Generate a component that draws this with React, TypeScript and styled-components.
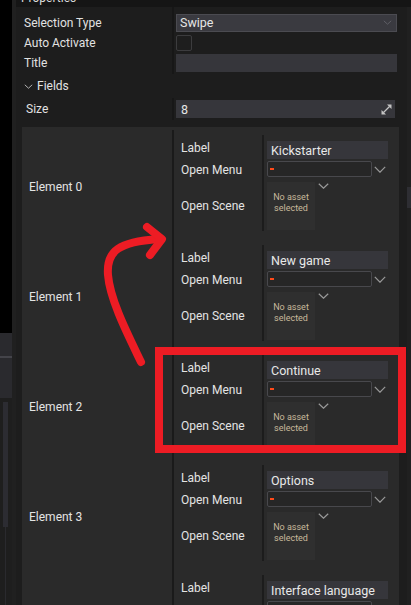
import styled, { createGlobalStyle } from 'styled-components';

const GlobalStyle = createGlobalStyle`
  html, body {
    margin: 0;
    padding: 0;
    background: #1d1d1d;
    overflow: hidden;
  }
  body {
    font-family: Roboto, "Liberation Sans", Arial, sans-serif;
    font-size: 12px;
    color: #e2e2e2;
  }
  * {
    box-sizing: border-box;
  }
`;

const Screen = styled.div`
  position: relative;
  display: flex;
  width: 411px;
  height: 605px;
  overflow: hidden;
`;

/* neighbouring dock panel, cut off at the left */
const SideDock = styled.div`
  width: 12px;
  flex-shrink: 0;
  display: flex;
  flex-direction: column;
`;

const DockViewport = styled.div`
  height: 333px;
  flex-shrink: 0;
  background: #000;
`;

const DockToolbar = styled.div`
  height: 65px;
  flex-shrink: 0;
  background: #2a2a2e;
  padding-top: 23px;
`;

const DockRule = styled.div`
  height: 2px;
  background: #44444a;
`;

const DockList = styled.div`
  flex: 1;
  display: flex;
  flex-direction: column;
  background: #1e1e1e;
  padding: 4px 0 0 3px;
`;

const DockThumb = styled.div`
  width: 5px;
  height: 125px;
  flex-shrink: 0;
  background: #2c2c32;
`;

const DockTrack = styled.div`
  flex: 1;
  width: 1px;
  margin-left: 2px;
  background: #2a2a2e;
`;

const Gutter = styled.div`
  width: 4px;
  flex-shrink: 0;
  background: #202020;
`;

const Main = styled.div`
  flex: 1;
  display: flex;
  flex-direction: column;
  background: #1d1d1d;
  min-width: 0;
`;

const Header = styled.div`
  height: 7px;
  flex-shrink: 0;
  background: #151515;
  overflow: hidden;
  padding-left: 5px;
`;

const HeaderTitle = styled.div`
  margin-top: -9px;
  line-height: 14px;
  font-size: 12px;
  color: #dcdcdc;
`;

const Body = styled.div`
  flex: 1;
  display: flex;
  min-height: 0;
`;

const Content = styled.div`
  flex: 1;
  display: flex;
  flex-direction: column;
  min-width: 0;
  overflow: hidden;
`;

const ScrollTrack = styled.div`
  width: 4px;
  flex-shrink: 0;
  background: #202020;
  padding-top: 180px;
`;

const ScrollThumb = styled.div`
  height: 21px;
  background: #2e2e33;
`;

const PropRow = styled.div<{ $h: number; $pt?: number }>`
  display: flex;
  flex-shrink: 0;
  height: ${p => p.$h}px;

  & > div {
    padding-top: ${p => p.$pt ?? 0}px;
  }
`;

const PropLabel = styled.div<{ $indent?: number }>`
  width: 156px;
  flex-shrink: 0;
  display: flex;
  align-items: center;
  padding-left: ${p => p.$indent ?? 8}px;
  white-space: nowrap;
`;

const PropValue = styled.div<{ $right?: number }>`
  flex: 1;
  display: flex;
  align-items: center;
  border-left: 2px solid #171717;
  padding-left: 2px;
  padding-right: ${p => p.$right ?? 10}px;
`;

const Dropdown = styled.div`
  flex: 1;
  height: 18px;
  display: flex;
  align-items: center;
  justify-content: space-between;
  background: #3a3a40;
  border: 1px solid #4b4b51;
  padding: 0 4px 0 3px;
  font-size: 12.5px;
  color: #e6e6e6;
`;

const Checkbox = styled.div`
  width: 16px;
  height: 16px;
  border: 1px solid #3c3c3e;
  border-radius: 2px;
  background: #1e1e1e;
`;

const TextField = styled.div`
  flex: 1;
  height: 18px;
  display: flex;
  align-items: center;
  justify-content: space-between;
  background: #36363b;
  padding: 0 3px 0 5px;
  font-size: 12.5px;
  color: #e6e6e6;
`;

const SectionRow = styled.div`
  height: 24px;
  flex-shrink: 0;
  display: flex;
  align-items: center;
  gap: 4px;
  padding-left: 8px;
`;

const ElementsBox = styled.div`
  flex-shrink: 0;
  margin: 7px 8px 0 6px;
  padding-top: 3px;
  background: #2a2a2a;
  display: flex;
  flex-direction: column;
`;

const ElementRow = styled.div`
  height: 110px;
  flex-shrink: 0;
  display: flex;
`;

const ElementName = styled.div`
  width: 150px;
  flex-shrink: 0;
  display: flex;
  align-items: center;
  padding: 3px 0 0 7px;
  color: #e4e4e4;
`;

const ElementBody = styled.div`
  flex: 1;
  border-left: 2px solid #1a1a1a;
  padding-top: 5px;
`;

const FieldGrid = styled.div`
  display: grid;
  grid-template-columns: 88px 2px 1fr;
  grid-template-rows: 24px 20px 52px;
`;

const FieldLabel = styled.div`
  display: flex;
  align-items: center;
  padding: 2px 0 0 7px;
  white-space: nowrap;
  color: #e4e4e4;
`;

const FieldDivider = styled.div`
  grid-column: 2;
  grid-row: 1 / -1;
  background: #1c1c1c;
`;

const FieldValue = styled.div<{ $align?: string }>`
  grid-column: 3;
  display: flex;
  align-items: ${p => p.$align ?? 'center'};
  padding-left: 3px;
`;

const LabelInput = styled.div`
  width: 121px;
  height: 18px;
  margin-top: 6px;
  display: flex;
  align-items: center;
  background: #36363b;
  padding-left: 4px;
  font-size: 12.5px;
  color: #e8e8e8;
  white-space: nowrap;
  overflow: hidden;
`;

const MenuBox = styled.div`
  width: 105px;
  height: 16px;
  display: flex;
  align-items: center;
  border: 1px solid #48484c;
  border-radius: 2px;
  background: #262626;
  padding-left: 2px;
  margin-right: 2px;
`;

const EmptyDash = styled.span`
  width: 4px;
  height: 2px;
  background: #ff4a1a;
`;

const AssetBox = styled.div`
  width: 48px;
  height: 48px;
  margin-top: 3px;
  display: flex;
  align-items: center;
  justify-content: center;
  padding-bottom: 7px;
  background: #2f2f2f;
  color: #c8b99c;
  font-size: 9px;
  line-height: 11px;
  text-align: center;
`;

const AssetArrow = styled.div`
  margin: 4px 0 0 3px;
  display: flex;
`;

const Overlay = styled.svg`
  position: absolute;
  left: 0;
  top: 0;
  pointer-events: none;
`;

function Chevron({ w, h, color, sw = 1.2 }: { w: number; h: number; color: string; sw?: number }) {
  return (
    <svg width={w} height={h} viewBox={`0 0 ${w} ${h}`}>
      <polyline
        points={`0.8,0.8 ${w / 2},${h - 0.8} ${w - 0.8},0.8`}
        fill="none"
        stroke={color}
        strokeWidth={sw}
      />
    </svg>
  );
}

function ExpandIcon() {
  return (
    <svg width="11" height="11" viewBox="0 0 11 11">
      <line x1="2.5" y1="8.5" x2="8.5" y2="2.5" stroke="#c4c4c4" strokeWidth="1.2" />
      <polygon points="10.5,0.5 10.5,5 6,0.5" fill="#c4c4c4" />
      <polygon points="0.5,10.5 0.5,6 5,10.5" fill="#c4c4c4" />
    </svg>
  );
}

const elements = ['Kickstarter', 'New game', 'Continue', 'Options', 'Interface language'];

function ElementEntry({ index, label }: { index: number; label: string }) {
  return (
    <ElementRow>
      <ElementName>Element {index}</ElementName>
      <ElementBody>
        <FieldGrid>
          <FieldLabel>Label</FieldLabel>
          <FieldDivider />
          <FieldValue $align="flex-start">
            <LabelInput>{label}</LabelInput>
          </FieldValue>
          <FieldLabel>Open Menu</FieldLabel>
          <FieldValue>
            <MenuBox>
              <EmptyDash />
            </MenuBox>
            <Chevron w={12} h={7} color="#9a9a9a" />
          </FieldValue>
          <FieldLabel>Open Scene</FieldLabel>
          <FieldValue $align="flex-start">
            <AssetBox>
              No asset
              <br />
              selected
            </AssetBox>
            <AssetArrow>
              <Chevron w={11} h={6} color="#9a9a9a" />
            </AssetArrow>
          </FieldValue>
        </FieldGrid>
      </ElementBody>
    </ElementRow>
  );
}

export default function App() {
  return (
    <>
      <GlobalStyle />
      <Screen>
        <SideDock>
          <DockViewport />
          <DockToolbar>
            <DockRule />
          </DockToolbar>
          <DockList>
            <DockThumb />
            <DockTrack />
          </DockList>
        </SideDock>
        <Gutter />
        <Main>
          <Header>
            <HeaderTitle>Properties</HeaderTitle>
          </Header>
          <Body>
            <Content>
              <PropRow $h={26} $pt={5}>
                <PropLabel>Selection Type</PropLabel>
                <PropValue>
                  <Dropdown>
                    Swipe
                    <Chevron w={9} h={5} color="#5f5f66" sw={1} />
                  </Dropdown>
                </PropValue>
              </PropRow>
              <PropRow $h={19}>
                <PropLabel>Auto Activate</PropLabel>
                <PropValue>
                  <Checkbox />
                </PropValue>
              </PropRow>
              <PropRow $h={22}>
                <PropLabel>Title</PropLabel>
                <PropValue>
                  <TextField />
                </PropValue>
              </PropRow>
              <SectionRow>
                <Chevron w={9} h={5} color="#b0b0b0" sw={1} />
                Fields
              </SectionRow>
              <PropRow $h={22}>
                <PropLabel $indent={10}>Size</PropLabel>
                <PropValue $right={12}>
                  <TextField>
                    8
                    <ExpandIcon />
                  </TextField>
                </PropValue>
              </PropRow>
              <ElementsBox>
                {elements.map((label, i) => (
                  <ElementEntry key={label} index={i} label={label} />
                ))}
              </ElementsBox>
            </Content>
            <ScrollTrack>
              <ScrollThumb />
            </ScrollTrack>
          </Body>
        </Main>
        <Overlay width="411" height="605" viewBox="0 0 411 605">
          <g fill="none" stroke="#ed1c24" strokeWidth="8" strokeLinecap="round" strokeLinejoin="round">
            <path d="M141 362 C 128 335, 110 300, 108 275 C 106 250, 120 242, 158 239" />
            <path d="M147 227 L162 239 L150 255" />
          </g>
          <rect x="159" y="351" width="243" height="98" fill="none" stroke="#ed1c24" strokeWidth="8" />
        </Overlay>
      </Screen>
    </>
  );
}
